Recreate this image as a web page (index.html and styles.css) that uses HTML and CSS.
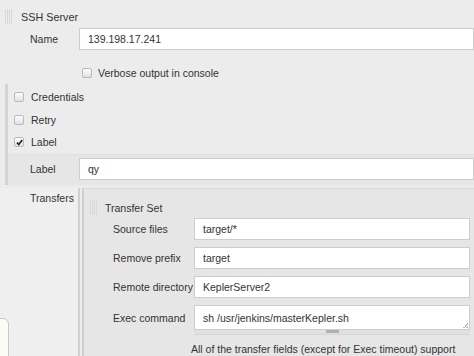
FILE: index.html
```html
<!DOCTYPE html>
<html lang="en">
<head>
    <meta charset="UTF-8">
    <title>SSH Server</title>
    <link rel="stylesheet" href="styles.css">
</head>
<body>
    <div class="page">
        <div class="section-head">
            <span class="grip"></span>
            <span>SSH Server</span>
        </div>

        <div class="row">
            <div class="setting-name">Name</div>
            <div class="field">139.198.17.241</div>
        </div>

        <div class="row verbose">
            <span class="cb"></span>
            <span>Verbose output in console</span>
        </div>

        <div class="optional">
            <div class="opt-row"><span class="cb"></span><span>Credentials</span></div>
            <div class="opt-row"><span class="cb"></span><span>Retry</span></div>
            <div class="opt-row"><span class="cb checked"><svg viewBox="0 0 9 9" width="9" height="9"><path d="M2 4.6 L3.8 6.6 L7.2 2" fill="none" stroke="#222" stroke-width="1.6"/></svg></span><span>Label</span></div>
            <div class="row nested">
                <div class="setting-name">Label</div>
                <div class="field">qy</div>
            </div>
        </div>

        <div class="transfers">
            <div class="setting-name top">Transfers</div>
            <div class="repeated">
                <div class="chunk">
                    <div class="chunk-head">
                        <span class="grip"></span>
                        <span>Transfer Set</span>
                    </div>
                    <div class="chunk-rows">
                        <div class="row">
                            <div class="chunk-name">Source files</div>
                            <div class="field">target/*</div>
                        </div>
                        <div class="row">
                            <div class="chunk-name">Remove prefix</div>
                            <div class="field">target</div>
                        </div>
                        <div class="row">
                            <div class="chunk-name">Remote directory</div>
                            <div class="field">KeplerServer2</div>
                        </div>
                        <div class="row area-row">
                            <div class="chunk-name">Exec command</div>
                            <div class="area-wrap">
                                <div class="area">sh /usr/jenkins/masterKepler.sh<span class="resize"></span></div>
                                <div class="area-handle"><span></span></div>
                            </div>
                        </div>
                    </div>
                    <div class="note">All of the transfer fields (except for Exec timeout) support</div>
                </div>
            </div>
        </div>
    </div>
    <div class="side-box"></div>
</body>
</html>
```

FILE: styles.css
```css
body{
    margin: 0;
    background: #ececec;
    color: #333;
    font: 10.5px "Liberation Sans", Arial, sans-serif;
    overflow: hidden;
    height: 356px;
}
.page{
    padding-top: 5px;
}
.grip{
    display: inline-block;
    width: 7px;
    height: 15px;
    background-image: repeating-linear-gradient(90deg, #d9d9d9 0 1px, transparent 1px 2px);
}
.section-head{
    display: flex;
    align-items: center;
    gap: 9px;
    height: 23px;
    padding-left: 5px;
    font-size: 10.8px;
}
.row{
    display: flex;
    align-items: center;
}
.setting-name{
    width: 79px;
    flex: none;
    box-sizing: border-box;
    padding-left: 30px;
}
.field{
    flex: 1;
    height: 22px;
    box-sizing: border-box;
    background: #fff;
    border: 1px solid #cdcdcd;
    padding-left: 8px;
    line-height: 20px;
    white-space: nowrap;
    overflow: hidden;
}
.verbose{
    margin-top: 12px;
    height: 22px;
    padding-left: 82px;
    gap: 6px;
}
.cb{
    display: inline-block;
    width: 8px;
    height: 8px;
    border: 1px solid #b9b9b9;
    border-radius: 2px;
    background: linear-gradient(#fdfdfd, #e2e2e2);
    position: relative;
}
.cb svg{
    position: absolute;
    left: -0.5px;
    top: -0.5px;
}
.optional{
    margin-left: 5px;
    border-left: 3px solid #d3d3d3;
    padding-top: 2px;
}
.opt-row{
    display: flex;
    align-items: center;
    gap: 7px;
    height: 22.5px;
    padding-left: 6px;
}
.nested{
    background: #e6e6e6;
    border-top: 1px solid #e0e0e0;
    padding: 3px 0 5px;
}
.nested .setting-name{
    width: 71px;
    padding-left: 22px;
}
.transfers{
    display: flex;
    align-items: flex-start;
    margin-top: 3px;
    background: #efefef;
}
.setting-name.top{
    padding-top: 4px;
    width: 78px;
}
.repeated{
    flex: 1;
    border-left: 2px solid #d0d0d0;
    padding-left: 2px;
    background: #ececec;
}
.chunk{
    border-left: 2px solid #cfcfcf;
    border-top: 1px solid #dadada;
    background: #e6e6e6;
    padding: 9px 4px 4px 0;
}
.chunk-head{
    display: flex;
    align-items: center;
    gap: 8px;
    height: 20px;
    padding-left: 6px;
}
.chunk-rows{
    display: flex;
    flex-direction: column;
    gap: 7px;
}
.chunk-name{
    width: 110px;
    flex: none;
    box-sizing: border-box;
    padding-left: 29px;
}
.area-row{
    align-items: flex-start;
}
.area-row .chunk-name{
    padding-top: 7px;
}
.area-wrap{
    flex: 1;
}
.area{
    position: relative;
    height: 25px;
    box-sizing: border-box;
    background: #fff;
    border: 1px solid #cdcdcd;
    padding: 6px 0 0 8px;
}
.resize{
    position: absolute;
    right: 1px;
    bottom: 1px;
    width: 5px;
    height: 5px;
    background: linear-gradient(135deg, transparent 50%, #bbb 50%, #bbb 62%, transparent 62%, transparent 78%, #bbb 78%);
}
.area-handle{
    height: 4px;
    background: #e0e0e0;
    border-bottom: 1px solid #d6d6d6;
    display: flex;
    justify-content: center;
}
.area-handle span{
    width: 13px;
    height: 3px;
    background: #b0b0b0;
}
.note{
    padding-left: 107px;
    margin-top: 8px;
}
.side-box{
    position: absolute;
    left: -6px;
    top: 318px;
    width: 13px;
    height: 50px;
    border: 1px solid #c8c8c8;
    border-radius: 6px;
    background: #fbfcf3;
}
```
